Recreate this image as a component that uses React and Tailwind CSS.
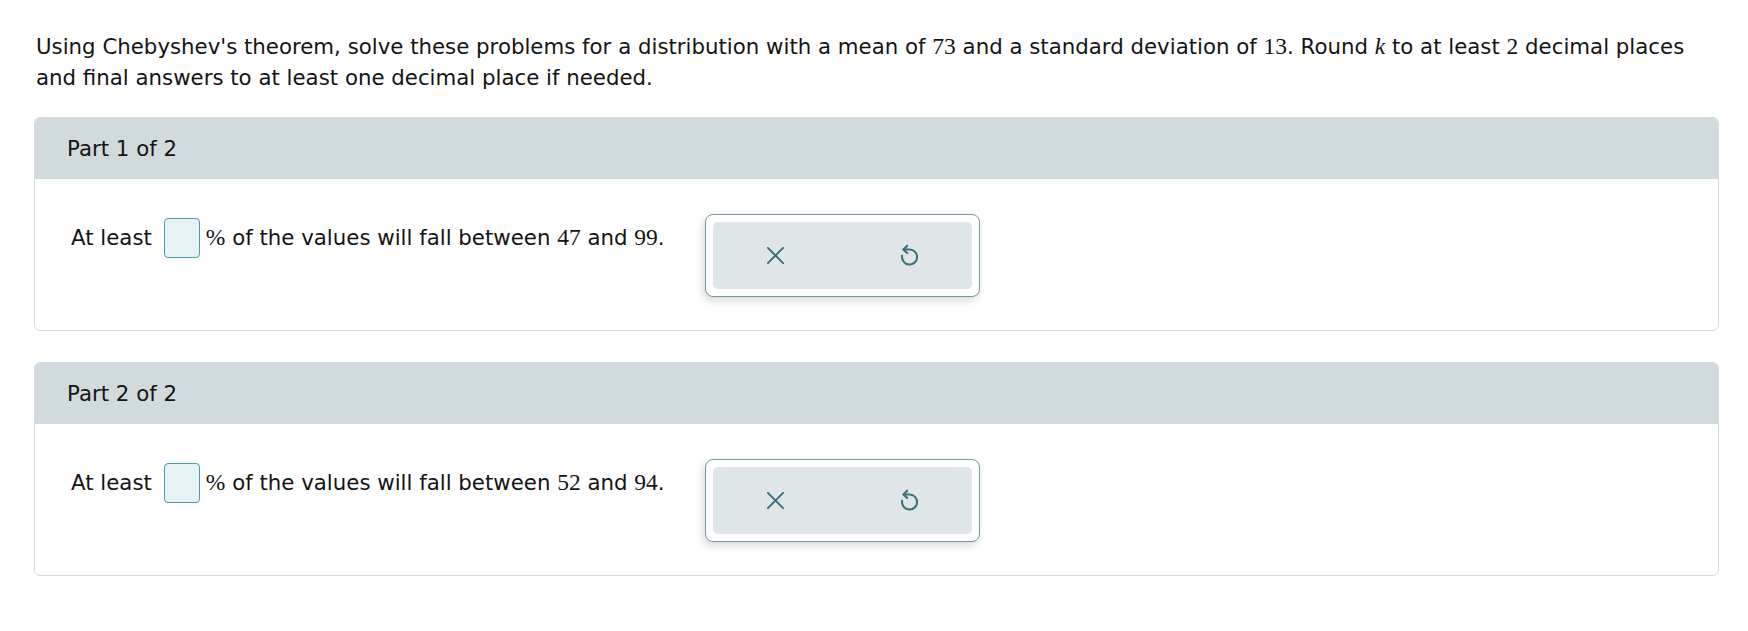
import React from 'react';

const serif = "font-['Liberation_Serif',serif] text-[23.5px]";

function UndoIcon() {
  return (
    <svg width="26" height="28" viewBox="0 0 24 26" fill="none" stroke="#3d6e7a" strokeWidth="1.9" strokeLinecap="round" strokeLinejoin="round">
      <path d="M10.3 3.4 L6.8 6.9 L10.3 10.3" />
      <path d="M7 6.9 H12.3 A7 7 0 1 1 5.6 12.8" />
    </svg>
  );
}

function XIcon() {
  return (
    <svg width="19" height="19" viewBox="0 0 20 20" fill="none" stroke="#3d6e7a" strokeWidth="2.1" strokeLinecap="round">
      <path d="M2 2 L18 18 M18 2 L2 18" />
    </svg>
  );
}

function Part({ n, a, b }) {
  return (
    <div className="rounded-[6px] border border-[#d3dbde] overflow-hidden bg-white">
      <div className="h-[61px] bg-[#d1dadd] flex items-center pl-[32px] pt-[1px] text-[21.3px]">
        Part {n} of 2
      </div>
      <div className="flex items-start pt-[35px] pb-[33px] pl-[36px]">
        <div className="flex items-center h-[40px] mt-[4px] text-[21.3px]">
          <span>At least</span>
          <span className="ml-[12px] w-[36px] h-[40px] rounded-[4px] border-[1.5px] border-[#4f9aaa] bg-[#e5f3f7]"></span>
          <span className="ml-[6px]">
            <span className={serif}>%</span> of the values will fall between <span className={serif}>{a}</span> and <span className={serif}>{b}</span>.
          </span>
        </div>
        <div className="ml-[40px] w-[275px] h-[83px] rounded-[8px] border border-[#7197a1] bg-white p-[7px] shadow-[-2px_4px_8px_rgba(0,0,0,0.14)]">
          <div className="h-full rounded-[5px] bg-[#dfe6e8] flex items-center">
            <div className="flex-1 flex justify-center pr-[2px]"><XIcon /></div>
            <div className="flex-1 flex justify-center pl-[6px] pt-[1px]"><UndoIcon /></div>
          </div>
        </div>
      </div>
    </div>
  );
}

export default function App() {
  return (
    <div className="min-h-screen bg-white pl-[34px] pr-[29px] pt-[31px] font-['DejaVu_Sans',sans-serif] text-[#141414]">
      <p className="text-[21.3px] leading-[31px] pl-[2px]">
        Using Chebyshev's theorem, solve these problems for a distribution with a mean of <span className={serif}>73</span> and a standard deviation of <span className={serif}>13</span>. Round <span className={serif + ' italic'}>k</span> to at least <span className={serif}>2</span> decimal places and final answers to at least one decimal place if needed.
      </p>
      <div className="mt-[24px] flex flex-col gap-[31px]">
        <Part n={1} a="47" b="99" />
        <Part n={2} a="52" b="94" />
      </div>
    </div>
  );
}
